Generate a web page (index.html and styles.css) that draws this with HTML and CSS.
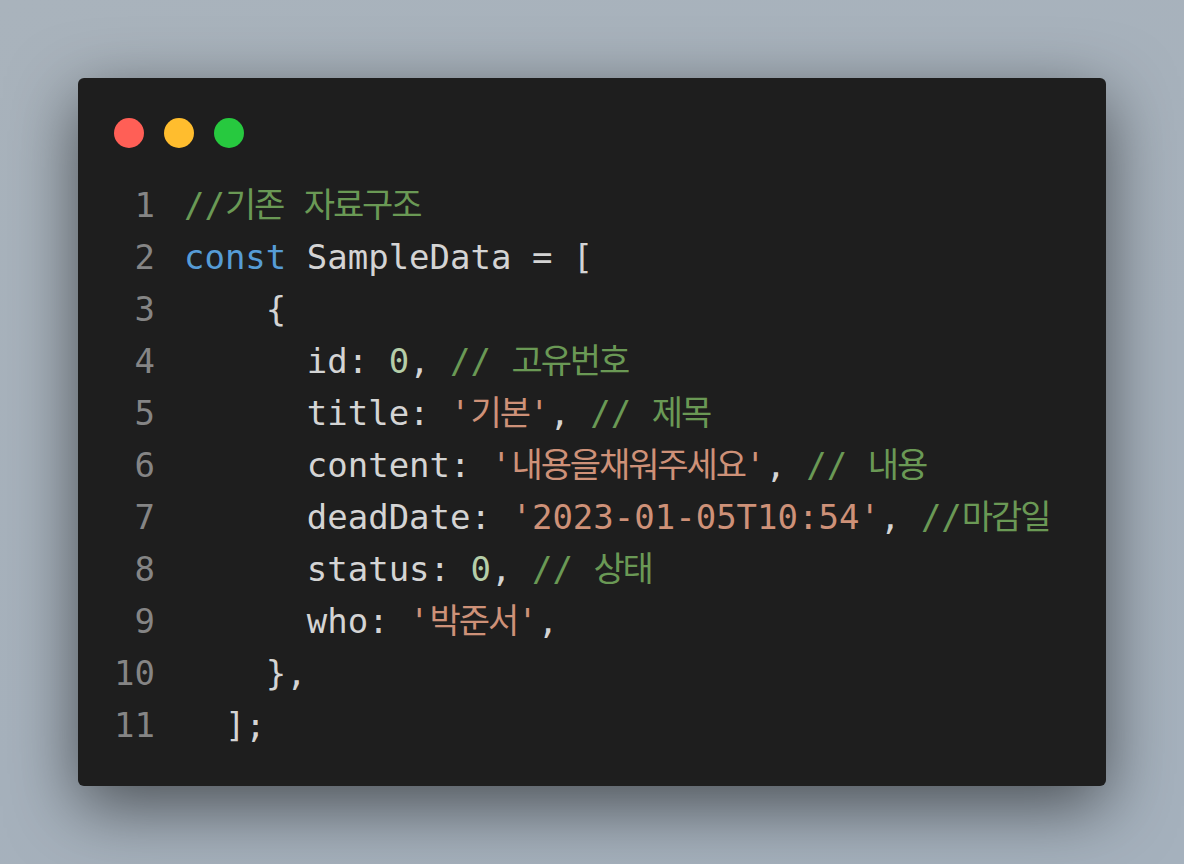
FILE: index.html
```html
<!DOCTYPE html>
<html lang="ko">
<head>
<meta charset="utf-8">
<title>Code snippet</title>
<link rel="stylesheet" href="styles.css">
</head>
<body>
<div class="window">
  <div class="controls">
    <span class="dot red"></span>
    <span class="dot yellow"></span>
    <span class="dot green"></span>
  </div>
  <div class="code">
    <div class="gutter">
      <div class="ln">1</div>
      <div class="ln">2</div>
      <div class="ln">3</div>
      <div class="ln">4</div>
      <div class="ln">5</div>
      <div class="ln">6</div>
      <div class="ln">7</div>
      <div class="ln">8</div>
      <div class="ln">9</div>
      <div class="ln">10</div>
      <div class="ln">11</div>
    </div>
    <div class="lines">
      <div class="line"><span class="cm">//<span class="k">기존</span> <span class="k">자료구조</span></span></div>
      <div class="line"><span class="kw">const</span> SampleData = [</div>
      <div class="line">    {</div>
      <div class="line">      id: <span class="num">0</span>, <span class="cm">// <span class="k">고유번호</span></span></div>
      <div class="line">      title: <span class="str">'<span class="k">기본</span>'</span>, <span class="cm">// <span class="k">제목</span></span></div>
      <div class="line">      content: <span class="str">'<span class="k">내용을채워주세요</span>'</span>, <span class="cm">// <span class="k">내용</span></span></div>
      <div class="line">      deadDate: <span class="str">'2023-01-05T10:54'</span>, <span class="cm">//<span class="k">마감일</span></span></div>
      <div class="line">      status: <span class="num">0</span>, <span class="cm">// <span class="k">상태</span></span></div>
      <div class="line">      who: <span class="str">'<span class="k">박준서</span>'</span>,</div>
      <div class="line">    },</div>
      <div class="line">  ];</div>
    </div>
  </div>
</div>
</body>
</html>
```
FILE: styles.css
```css
html, body {
  margin: 0;
  padding: 0;
}

body {
  width: 1184px;
  height: 864px;
  box-sizing: border-box;
  padding: 78px;
  background: #abb8c3;
  background: linear-gradient(160deg, #a9b3bc 0%, #a6b1bc 60%, #a5b1bd 100%);
  overflow: hidden;
}

.window {
  background: #1e1e1e;
  border-radius: 6px;
  box-shadow: 0 20px 68px rgba(0, 0, 0, 0.55);
  padding: 40px 0 35px 36px;
}

.controls {
  display: flex;
  gap: 20px;
  height: 30px;
  margin-bottom: 31px;
}

.dot {
  width: 30px;
  height: 30px;
  border-radius: 50%;
  display: block;
}

.red { background: #ff5f56; }
.yellow { background: #ffbd2e; }
.green { background: #27c93f; }

.code {
  display: flex;
  font-family: "DejaVu Sans Mono", "Liberation Mono", "Noto Sans CJK KR", monospace;
  font-size: 34px;
  color: #d4d4d4;
}

.gutter {
  width: 2ch;
  margin-left: 0;
  margin-right: 29px;
  text-align: right;
  color: #858585;
}

.ln, .line {
  height: 52px;
  line-height: 52px;
  white-space: pre;
}

.k {
  font-family: "Noto Sans CJK KR", sans-serif;
  font-size: 34px;
  letter-spacing: -2.1px;
  line-height: 1;
}

.cm { color: #6a9955; }
.kw { color: #569cd6; }
.str { color: #ce9178; }
.num { color: #b5cea8; }
```
